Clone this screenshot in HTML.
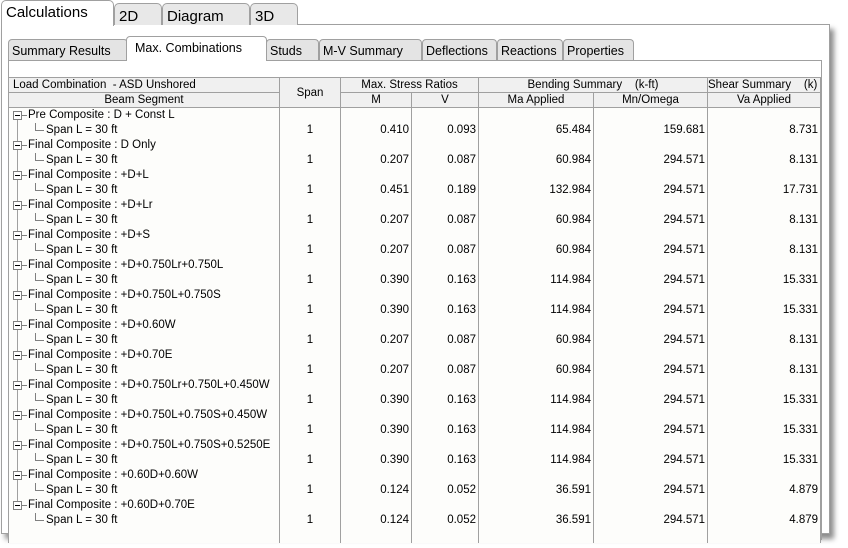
<!DOCTYPE html>
<html><head><meta charset="utf-8"><style>
*{box-sizing:border-box;margin:0;padding:0}
body{width:848px;height:548px;background:#fff;position:relative;overflow:hidden;font-family:"Liberation Sans",sans-serif;font-size:11.5px;color:#000}
.win{position:absolute;left:1px;top:24px;width:829px;height:510px;border:1px solid #a0a0a0;background:#fff;box-shadow:4px 5px 5px rgba(0,0,0,.45)}
.tab{position:absolute;height:22px;border:1px solid #a0a0a0;border-bottom:none;background:#e8e8e8;border-radius:5px 5px 0 0;font-size:15px;padding:4px 4px 0 4px}
.tab.act{background:#fff;height:26px;z-index:2;padding-top:3px}
.st{position:absolute;top:39px;height:21px;border:1px solid #a0a0a0;border-bottom:none;background:#e4e4e4;border-radius:4px 4px 0 0;font-size:12.5px;padding:4px 3px 0 3px}
.st.act{background:#fff;top:36px;height:25px;z-index:2;padding-top:4px}
.panel{position:absolute;left:8px;top:60px;width:814px;height:480px;border:1px solid #a0a0a0;border-bottom:none}
table{position:absolute;left:8px;top:77px;border-collapse:collapse;table-layout:fixed;width:812px}
td{height:15px;padding:0 2px;white-space:nowrap;line-height:14px;border-left:1px solid #a0a0a0;border-right:1px solid #a0a0a0;text-align:right;background:#fdfdfb}
.h td{background:#f0f0f0;border:1px solid #a0a0a0;text-align:center;height:15px}
td.c{text-align:center}
td.l{text-align:left;padding-left:19px;position:relative}
td.k{text-align:left;padding-left:37px;position:relative}
.bx{position:absolute;left:4px;top:3px;width:9px;height:9px;border:1px solid #808080;background:#fff}
.bx:after{content:"";position:absolute;left:1px;top:3px;width:5px;height:1px;background:#000}
.hl{position:absolute;left:13px;top:7px;width:5px;height:1px;background:#808080}
.vl{position:absolute;left:8px;top:0;width:1px;height:15px;background:#a0a0a0}
.cv{position:absolute;left:26px;top:0;width:1px;height:8px;background:#808080}
.ch{position:absolute;left:26px;top:7px;width:9px;height:1px;background:#808080}
</style></head><body>
<div class="win"></div>
<div class="tab act" style="left:1px;top:0;width:113px;font-size:15px">Calculations</div>
<div class="tab" style="left:114px;top:3px;width:48px">2D</div>
<div class="tab" style="left:162px;top:3px;width:88px">Diagram</div>
<div class="tab" style="left:250px;top:3px;width:48px">3D</div>
<div class="panel"></div>
<div class="st" style="left:8px;width:120px">Summary Results</div>
<div class="st act" style="left:126px;width:141px;padding-left:8px">Max. Combinations</div>
<div class="st" style="left:266px;width:53px">Studs</div>
<div class="st" style="left:319px;width:103px">M-V Summary</div>
<div class="st" style="left:422px;width:75px">Deflections</div>
<div class="st" style="left:497px;width:66px">Reactions</div>
<div class="st" style="left:563px;width:71px">Properties</div>
<table>
<colgroup><col style="width:271px"><col style="width:61px"><col style="width:71px"><col style="width:67px"><col style="width:115px"><col style="width:114px"><col style="width:113px"></colgroup>
<tr class="h"><td style="text-align:left;padding-left:4px">Load Combination&nbsp; - ASD Unshored</td><td rowspan="2">Span</td><td colspan="2">Max. Stress Ratios</td><td colspan="2">Bending Summary&nbsp;&nbsp;&nbsp; (k-ft)</td><td style="text-align:left;padding-left:0">Shear Summary&nbsp;&nbsp;&nbsp; (k)</td></tr>
<tr class="h"><td>Beam Segment</td><td>M</td><td>V</td><td>Ma Applied</td><td>Mn/Omega</td><td>Va Applied</td></tr>
<tr><td class="l"><i class="vl" style="top:8px"></i><i class="bx"></i><i class="hl"></i>Pre Composite : D + Const L</td><td></td><td></td><td></td><td></td><td></td><td></td></tr>
<tr><td class="k"><i class="vl"></i><i class="cv"></i><i class="ch"></i>Span L = 30 ft</td><td class="c">1</td><td>0.410</td><td>0.093</td><td>65.484</td><td>159.681</td><td>8.731</td></tr>
<tr><td class="l"><i class="vl"></i><i class="bx"></i><i class="hl"></i>Final Composite : D Only</td><td></td><td></td><td></td><td></td><td></td><td></td></tr>
<tr><td class="k"><i class="vl"></i><i class="cv"></i><i class="ch"></i>Span L = 30 ft</td><td class="c">1</td><td>0.207</td><td>0.087</td><td>60.984</td><td>294.571</td><td>8.131</td></tr>
<tr><td class="l"><i class="vl"></i><i class="bx"></i><i class="hl"></i>Final Composite : +D+L</td><td></td><td></td><td></td><td></td><td></td><td></td></tr>
<tr><td class="k"><i class="vl"></i><i class="cv"></i><i class="ch"></i>Span L = 30 ft</td><td class="c">1</td><td>0.451</td><td>0.189</td><td>132.984</td><td>294.571</td><td>17.731</td></tr>
<tr><td class="l"><i class="vl"></i><i class="bx"></i><i class="hl"></i>Final Composite : +D+Lr</td><td></td><td></td><td></td><td></td><td></td><td></td></tr>
<tr><td class="k"><i class="vl"></i><i class="cv"></i><i class="ch"></i>Span L = 30 ft</td><td class="c">1</td><td>0.207</td><td>0.087</td><td>60.984</td><td>294.571</td><td>8.131</td></tr>
<tr><td class="l"><i class="vl"></i><i class="bx"></i><i class="hl"></i>Final Composite : +D+S</td><td></td><td></td><td></td><td></td><td></td><td></td></tr>
<tr><td class="k"><i class="vl"></i><i class="cv"></i><i class="ch"></i>Span L = 30 ft</td><td class="c">1</td><td>0.207</td><td>0.087</td><td>60.984</td><td>294.571</td><td>8.131</td></tr>
<tr><td class="l"><i class="vl"></i><i class="bx"></i><i class="hl"></i>Final Composite : +D+0.750Lr+0.750L</td><td></td><td></td><td></td><td></td><td></td><td></td></tr>
<tr><td class="k"><i class="vl"></i><i class="cv"></i><i class="ch"></i>Span L = 30 ft</td><td class="c">1</td><td>0.390</td><td>0.163</td><td>114.984</td><td>294.571</td><td>15.331</td></tr>
<tr><td class="l"><i class="vl"></i><i class="bx"></i><i class="hl"></i>Final Composite : +D+0.750L+0.750S</td><td></td><td></td><td></td><td></td><td></td><td></td></tr>
<tr><td class="k"><i class="vl"></i><i class="cv"></i><i class="ch"></i>Span L = 30 ft</td><td class="c">1</td><td>0.390</td><td>0.163</td><td>114.984</td><td>294.571</td><td>15.331</td></tr>
<tr><td class="l"><i class="vl"></i><i class="bx"></i><i class="hl"></i>Final Composite : +D+0.60W</td><td></td><td></td><td></td><td></td><td></td><td></td></tr>
<tr><td class="k"><i class="vl"></i><i class="cv"></i><i class="ch"></i>Span L = 30 ft</td><td class="c">1</td><td>0.207</td><td>0.087</td><td>60.984</td><td>294.571</td><td>8.131</td></tr>
<tr><td class="l"><i class="vl"></i><i class="bx"></i><i class="hl"></i>Final Composite : +D+0.70E</td><td></td><td></td><td></td><td></td><td></td><td></td></tr>
<tr><td class="k"><i class="vl"></i><i class="cv"></i><i class="ch"></i>Span L = 30 ft</td><td class="c">1</td><td>0.207</td><td>0.087</td><td>60.984</td><td>294.571</td><td>8.131</td></tr>
<tr><td class="l"><i class="vl"></i><i class="bx"></i><i class="hl"></i>Final Composite : +D+0.750Lr+0.750L+0.450W</td><td></td><td></td><td></td><td></td><td></td><td></td></tr>
<tr><td class="k"><i class="vl"></i><i class="cv"></i><i class="ch"></i>Span L = 30 ft</td><td class="c">1</td><td>0.390</td><td>0.163</td><td>114.984</td><td>294.571</td><td>15.331</td></tr>
<tr><td class="l"><i class="vl"></i><i class="bx"></i><i class="hl"></i>Final Composite : +D+0.750L+0.750S+0.450W</td><td></td><td></td><td></td><td></td><td></td><td></td></tr>
<tr><td class="k"><i class="vl"></i><i class="cv"></i><i class="ch"></i>Span L = 30 ft</td><td class="c">1</td><td>0.390</td><td>0.163</td><td>114.984</td><td>294.571</td><td>15.331</td></tr>
<tr><td class="l"><i class="vl"></i><i class="bx"></i><i class="hl"></i>Final Composite : +D+0.750L+0.750S+0.5250E</td><td></td><td></td><td></td><td></td><td></td><td></td></tr>
<tr><td class="k"><i class="vl"></i><i class="cv"></i><i class="ch"></i>Span L = 30 ft</td><td class="c">1</td><td>0.390</td><td>0.163</td><td>114.984</td><td>294.571</td><td>15.331</td></tr>
<tr><td class="l"><i class="vl"></i><i class="bx"></i><i class="hl"></i>Final Composite : +0.60D+0.60W</td><td></td><td></td><td></td><td></td><td></td><td></td></tr>
<tr><td class="k"><i class="vl"></i><i class="cv"></i><i class="ch"></i>Span L = 30 ft</td><td class="c">1</td><td>0.124</td><td>0.052</td><td>36.591</td><td>294.571</td><td>4.879</td></tr>
<tr><td class="l"><i class="vl" style="height:8px"></i><i class="bx"></i><i class="hl"></i>Final Composite : +0.60D+0.70E</td><td></td><td></td><td></td><td></td><td></td><td></td></tr>
<tr><td class="k"><i class="cv"></i><i class="ch"></i>Span L = 30 ft</td><td class="c">1</td><td>0.124</td><td>0.052</td><td>36.591</td><td>294.571</td><td>4.879</td></tr>
<tr><td style="height:6px"></td><td></td><td></td><td></td><td></td><td></td><td></td></tr>
</table>
</body></html>
